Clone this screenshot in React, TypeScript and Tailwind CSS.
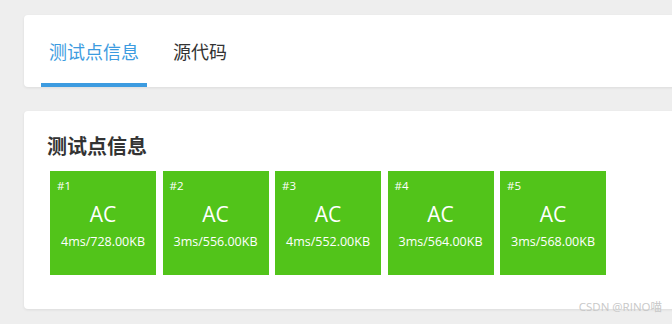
const cases = [
  { id: 1, info: "4ms/728.00KB" },
  { id: 2, info: "3ms/556.00KB" },
  { id: 3, info: "4ms/552.00KB" },
  { id: 4, info: "3ms/564.00KB" },
  { id: 5, info: "3ms/568.00KB" },
];

const font = { fontFamily: '"Open Sans", "Noto Sans CJK SC", sans-serif' };

const App = () => {
  return (
    <div
      className="relative w-[672px] h-[324px] bg-[#eeeeee] overflow-hidden pt-[15px] pl-[24px]"
      style={font}
    >
      <div className="w-[680px] h-[72px] bg-white rounded-[4px] shadow-[0_1px_3px_rgba(0,0,0,0.08)] flex px-[17px]">
        <div className="w-[106px] h-full flex flex-col items-center">
          <p className="mt-[25px] text-[18px] leading-[24px] text-[#3c9be0]">测试点信息</p>
          <div className="mt-auto w-full h-[4px] bg-[#3c9be0]" />
        </div>
        <div className="w-[106px] h-full flex flex-col items-center">
          <p className="mt-[25px] text-[18px] leading-[24px] text-[#333333]">源代码</p>
        </div>
      </div>

      <div className="mt-[24px] w-[680px] h-[198px] bg-white rounded-[4px] shadow-[0_1px_3px_rgba(0,0,0,0.08)] pl-[23px] pt-[24px]">
        <p className="text-[20px] leading-[24px] font-bold text-[#333333]">测试点信息</p>
        <div className="mt-[12px] ml-[3px] flex gap-[6.5px]">
          {cases.map((c) => (
            <div
              key={c.id}
              className="w-[106px] h-[104px] bg-[#52c41a] text-white flex flex-col"
            >
              <p className="mt-[8px] ml-[7px] text-[11.5px] leading-[14px] font-medium">#{c.id}</p>
              <p className="mt-[8px] text-center text-[21px] leading-[26px]">AC</p>
              <p className="mt-[7px] text-center text-[12.5px] leading-[16px]">{c.info}</p>
            </div>
          ))}
        </div>
      </div>

      <p className="absolute right-[10px] bottom-[10px] text-[11.5px] leading-[14px] text-[#c8c8c8]">
        CSDN @RINO喵
      </p>
    </div>
  );
};

export default App;
